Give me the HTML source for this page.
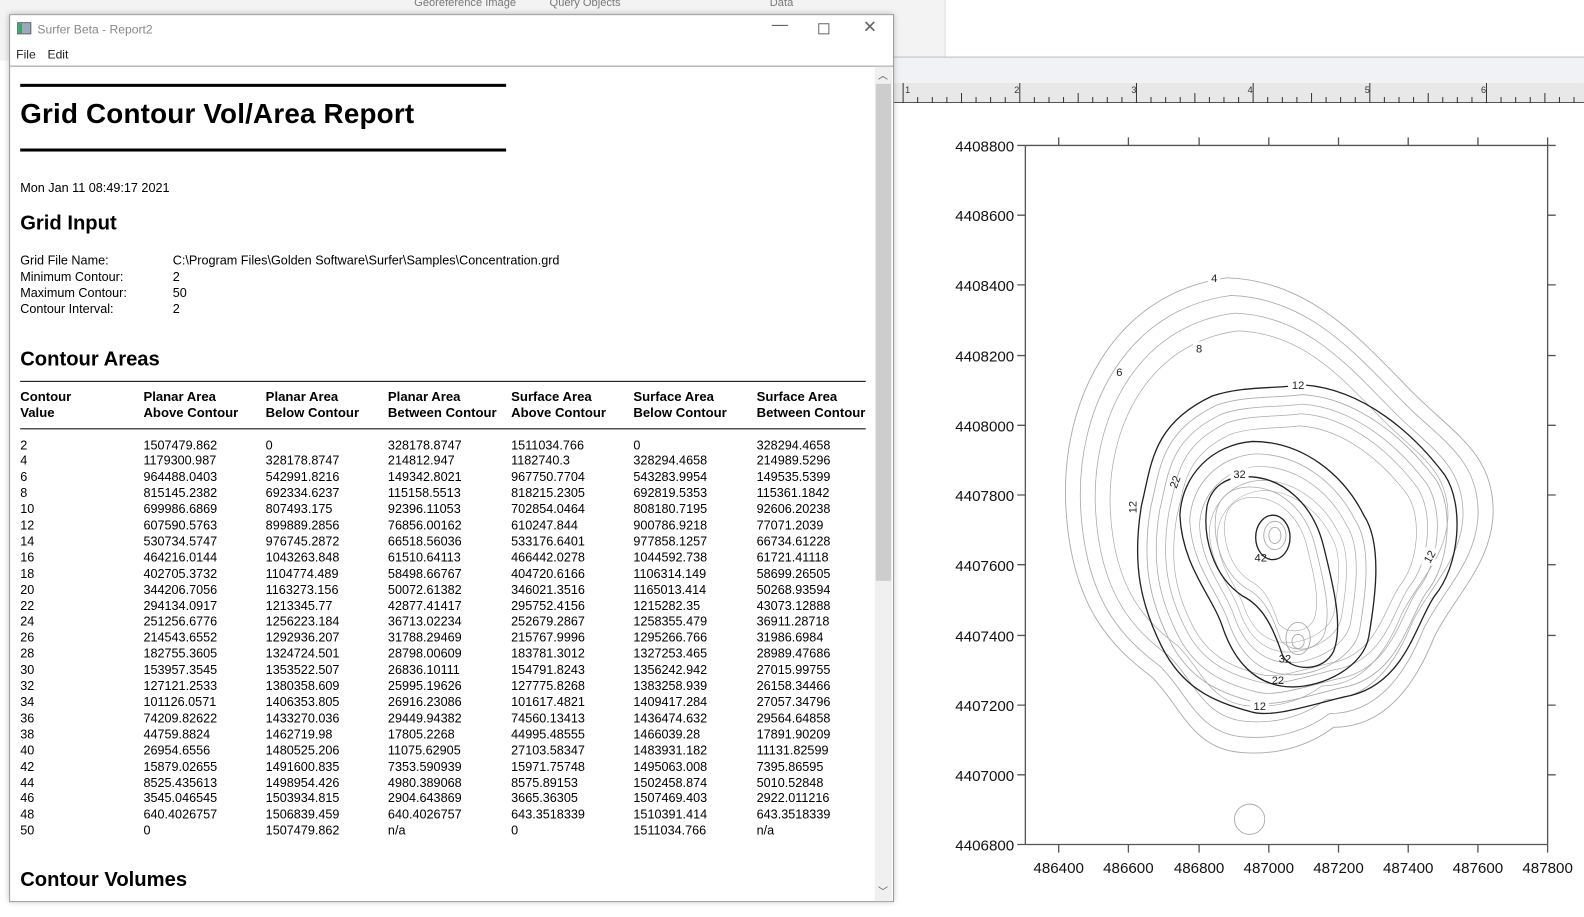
<!DOCTYPE html>
<html><head><meta charset="utf-8"><style>
*{margin:0;padding:0;box-sizing:border-box}
html,body{width:1584px;height:908px;overflow:hidden;background:#fff}
#w{position:absolute;left:0;top:0;width:1568px;height:899px;transform:scale(1.0102);transform-origin:0 0;font-family:"Liberation Sans",Arial,sans-serif}
.abs{position:absolute}
.t{position:absolute;font-size:12.5px;color:#000;white-space:nowrap}
.col{position:absolute;top:0;white-space:nowrap}
</style></head><body><div id="w">
<div class="abs" style="left:0;top:0;width:1568px;height:60px;background:#f3f3f3"></div>
<div class="abs" style="left:935px;top:0;width:633px;height:56px;background:#fff;border-left:1px solid #ddd"></div>
<div class="abs" style="left:884px;top:56px;width:684px;height:26px;background:#f0f2f5;border-top:1px solid #b8bec6"></div>
<div class="t" style="left:410px;top:-3px;color:#777;font-size:11px">Georeference Image</div>
<div class="t" style="left:544px;top:-3px;color:#777;font-size:11px">Query Objects</div>
<div class="t" style="left:762px;top:-3px;color:#777;font-size:11px">Data</div>
<svg class="abs" style="left:884px;top:82px" width="700" height="20">
<rect width="700" height="20" fill="#e8e8e8"/>
<line x1="0" y1="19.5" x2="700" y2="19.5" stroke="#555"/>
<path stroke="#333" d="M10 0V20M125.5 0V20M241 0V20M356.5 0V20M472 0V20M587.5 0V20"/>
<path stroke="#333" d="M24.4 14V20M38.9 14V20M53.3 14V20M67.8 10V20M82.2 14V20M96.6 14V20M111.1 14V20M139.9 14V20M154.4 14V20M168.8 14V20M183.3 10V20M197.7 14V20M212.1 14V20M226.6 14V20M255.4 14V20M269.9 14V20M284.3 14V20M298.8 10V20M313.2 14V20M327.6 14V20M342.1 14V20M370.9 14V20M385.4 14V20M399.8 14V20M414.3 10V20M428.7 14V20M443.1 14V20M457.6 14V20M486.4 14V20M500.9 14V20M515.3 14V20M529.8 10V20M544.2 14V20M558.6 14V20M573.1 14V20M601.9 14V20M616.4 14V20M630.8 14V20M645.3 10V20M659.7 14V20M674.1 14V20M688.6 14V20"/>
<g font-size="9" fill="#333" font-family="Liberation Sans"><text x="12" y="10">1</text><text x="120" y="10">2</text><text x="236" y="10">3</text><text x="351" y="10">4</text><text x="467" y="10">5</text><text x="582" y="10">6</text></g>
</svg>
<svg class="abs" style="left:884px;top:102px" width="700" height="806" viewBox="884 102 700 806">
<g stroke="#555" stroke-width="1.3" fill="none">
<path d="M1015 144H1540M1015 144V836M1532 136V836M1007 836H1532"/>
<path d="M1048 136V144M1117 136V144M1187 136V144M1256 136V144M1325 136V144M1394 136V144M1463 136V144M1048 836V844M1117 836V844M1187 836V844M1256 836V844M1325 836V844M1394 836V844M1463 836V844M1532 836V844"/>
<path d="M1007 144H1015M1007 213H1015M1007 282H1015M1007 352H1015M1007 421H1015M1007 490H1015M1007 559H1015M1007 629H1015M1007 698H1015M1007 767H1015M1532 213H1540M1532 282H1540M1532 352H1540M1532 421H1540M1532 490H1540M1532 559H1540M1532 629H1540M1532 698H1540M1532 767H1540"/>
</g>
<g font-size="15" fill="#111" font-family="Liberation Sans" text-anchor="end">
<text x="1004" y="150">4408800</text><text x="1004" y="219">4408600</text><text x="1004" y="288">4408400</text><text x="1004" y="358">4408200</text><text x="1004" y="427">4408000</text><text x="1004" y="496">4407800</text><text x="1004" y="565">4407600</text><text x="1004" y="635">4407400</text><text x="1004" y="704">4407200</text><text x="1004" y="773">4407000</text><text x="1004" y="842">4406800</text>
</g>
<g font-size="15" fill="#111" font-family="Liberation Sans" text-anchor="middle">
<text x="1048" y="864">486400</text><text x="1117" y="864">486600</text><text x="1187" y="864">486800</text><text x="1256" y="864">487000</text><text x="1325" y="864">487200</text><text x="1394" y="864">487400</text><text x="1463" y="864">487600</text><text x="1532" y="864">487800</text>
</g>
<g fill="none" stroke="#aaa" stroke-width="0.9">
<path id="c4" d="M1215 275C1300 278 1350 340 1400 390C1440 430 1480 450 1478 510C1475 560 1440 590 1420 630C1400 680 1370 720 1320 720C1300 735 1270 748 1230 745C1180 742 1170 700 1140 670C1100 640 1060 600 1055 500C1050 400 1100 290 1215 275Z"/>
<use href="#c4" transform="translate(1265 525) scale(.93) translate(-1265 -525)"/>
<use href="#c4" transform="translate(1265 525) scale(.86) translate(-1265 -525)"/>
<use href="#c4" transform="translate(1265 525) scale(.79) translate(-1265 -525)"/>
<use href="#c12" transform="translate(1280 540) scale(.94) translate(-1280 -540)"/>
<use href="#c12" transform="translate(1280 540) scale(.88) translate(-1280 -540)"/>
<use href="#c12" transform="translate(1280 540) scale(.82) translate(-1280 -540)"/>
<use href="#c12" transform="translate(1275 550) scale(.76) translate(-1275 -550)"/>
<use href="#c22" transform="translate(1265 560) scale(.9) translate(-1265 -560)"/>
<use href="#c22" transform="translate(1265 560) scale(.8) translate(-1265 -560)"/>
<use href="#c22" transform="translate(1265 565) scale(.7) translate(-1265 -565)"/>
<use href="#c22" transform="translate(1265 565) scale(.62) translate(-1265 -565)"/>
<use href="#c32" transform="translate(1255 540) scale(.85) translate(-1255 -540)"/>
<use href="#c32" transform="translate(1255 540) scale(.7) translate(-1255 -540)"/>
<ellipse cx="1262" cy="530" rx="11" ry="14"/><ellipse cx="1262" cy="530" rx="6" ry="8"/>
<ellipse cx="1285" cy="632" rx="12" ry="16"/><ellipse cx="1285" cy="635" rx="6" ry="7"/>
<circle cx="1237" cy="811" r="15"/>
</g>
<g fill="none" stroke="#222" stroke-width="1.3">
<path id="c12" d="M1290 381C1350 385 1400 430 1430 470C1450 500 1445 560 1420 590C1400 620 1390 680 1330 690C1290 700 1260 710 1240 705C1200 695 1170 680 1150 640C1130 600 1120 560 1130 500C1140 460 1140 420 1200 392C1230 382 1260 385 1290 381Z"/>
<path id="c22" d="M1240 437C1290 437 1330 470 1350 510C1370 540 1360 600 1355 630C1350 660 1310 680 1280 680C1240 680 1220 650 1210 620C1200 590 1170 560 1168 510C1170 470 1200 440 1240 437Z"/>
<path id="c32" d="M1230 472C1270 470 1300 500 1310 540C1320 580 1330 620 1320 645C1310 665 1280 665 1270 650C1260 620 1250 600 1230 590C1200 570 1190 530 1195 500C1200 480 1215 473 1230 472Z"/>
<ellipse cx="1260" cy="532" rx="17" ry="22"/>
</g>
<g font-size="11" fill="#222" font-family="Liberation Sans" text-anchor="middle">
<rect x="1196" y="268" width="12" height="12" fill="#fff"/><text x="1202" y="279">4</text>
<rect x="1181" y="338" width="12" height="12" fill="#fff"/><text x="1187" y="349">8</text>
<text x="1108" y="372">6</text>
<rect x="1275" y="374" width="18" height="12" fill="#fff"/><text x="1285" y="385">12</text>
<rect x="1112" y="496" width="14" height="18" fill="#fff"/><text x="1123" y="510" transform="rotate(-90 1120 505)">12</text>
<rect x="1407" y="542" width="14" height="18" fill="#fff"/><text x="1415" y="555" transform="rotate(-60 1415 551)">12</text>
<rect x="1218" y="463" width="18" height="12" fill="#fff"/><text x="1227" y="473">32</text>
<text x="1163" y="481" transform="rotate(-70 1163 477)">22</text>
<text x="1248" y="556">42</text>
<text x="1272" y="656">32</text>
<text x="1265" y="677">22</text>
<rect x="1238" y="692" width="18" height="12" fill="#fff"/><text x="1247" y="703">12</text>
</g>
</svg>
<div class="abs" style="left:9px;top:14px;width:876px;height:879px;background:#fff;border:1px solid #9a9a9a;box-shadow:0 0 6px rgba(0,0,0,.25)"></div>
<div class="abs" style="left:17px;top:22px;width:14px;height:12px;border:1px solid #556;background:linear-gradient(90deg,#3a6 0 4px,#9ab 4px)"></div>
<div class="t" style="left:37px;top:22px;color:#888;font-size:12px">Surfer Beta - Report2</div>
<div class="t" style="left:764px;top:16px;color:#666;font-size:16px">—</div>
<div class="abs" style="left:810px;top:23px;width:11px;height:11px;border:1px solid #666"></div>
<div class="t" style="left:854px;top:17px;color:#666;font-size:17px">✕</div>
<div class="t" style="left:16px;top:47px;color:#222;font-size:12px">File</div>
<div class="t" style="left:47px;top:47px;color:#222;font-size:12px">Edit</div>
<div class="abs" style="left:10px;top:65px;width:874px;height:1px;background:#999"></div>
<div class="abs" style="left:866px;top:66px;width:17px;height:826px;background:#f0f0f0"></div>
<div class="abs" style="left:867px;top:83px;width:15px;height:492px;background:#cdcdcd"></div>
<div class="t" style="left:869px;top:66px;color:#555;font-size:10px">︿</div>
<div class="t" style="left:869px;top:874px;color:#555;font-size:10px">﹀</div>
<div class="abs" style="left:20px;top:83px;width:481px;height:3px;background:#000"></div>
<div class="t" style="left:20px;top:97px;font-size:27.5px;font-weight:bold;letter-spacing:0.2px">Grid Contour Vol/Area Report</div>
<div class="abs" style="left:20px;top:147px;width:481px;height:3px;background:#000"></div>
<div class="t" style="left:20px;top:179px">Mon Jan 11 08:49:17 2021</div>
<div class="t" style="left:20px;top:210px;font-size:20px;font-weight:bold">Grid Input</div>
<div class="t" style="left:20px;top:251px">Grid File Name:</div><div class="t" style="left:171px;top:251px">C:\Program Files\Golden Software\Surfer\Samples\Concentration.grd</div>
<div class="t" style="left:20px;top:267px">Minimum Contour:</div><div class="t" style="left:171px;top:267px">2</div>
<div class="t" style="left:20px;top:283px">Maximum Contour:</div><div class="t" style="left:171px;top:283px">50</div>
<div class="t" style="left:20px;top:299px">Contour Interval:</div><div class="t" style="left:171px;top:299px">2</div>
<div class="t" style="left:20px;top:345px;font-size:20px;font-weight:bold">Contour Areas</div>
<div class="abs" style="left:20px;top:377px;width:837px;height:1px;background:#000"></div>
<div class="abs" style="left:20px;top:424px;width:837px;height:1px;background:#000"></div>
<div class="t" style="left:20px;top:385px;font-weight:bold;font-size:13px;line-height:16px">Contour<br>Value</div>
<div class="t" style="left:142px;top:385px;font-weight:bold;font-size:13px;line-height:16px">Planar Area<br>Above Contour</div>
<div class="t" style="left:263px;top:385px;font-weight:bold;font-size:13px;line-height:16px">Planar Area<br>Below Contour</div>
<div class="t" style="left:384px;top:385px;font-weight:bold;font-size:13px;line-height:16px">Planar Area<br>Between Contour</div>
<div class="t" style="left:506px;top:385px;font-weight:bold;font-size:13px;line-height:16px">Surface Area<br>Above Contour</div>
<div class="t" style="left:627px;top:385px;font-weight:bold;font-size:13px;line-height:16px">Surface Area<br>Below Contour</div>
<div class="t" style="left:749px;top:385px;font-weight:bold;font-size:13px;line-height:16px">Surface Area<br>Between Contour</div>
<div class="abs" style="left:20px;top:433.5px;font-size:12.5px;line-height:15.9px">
<div class="col" style="left:0">2<br>4<br>6<br>8<br>10<br>12<br>14<br>16<br>18<br>20<br>22<br>24<br>26<br>28<br>30<br>32<br>34<br>36<br>38<br>40<br>42<br>44<br>46<br>48<br>50</div>
<div class="col" style="left:122px">1507479.862<br>1179300.987<br>964488.0403<br>815145.2382<br>699986.6869<br>607590.5763<br>530734.5747<br>464216.0144<br>402705.3732<br>344206.7056<br>294134.0917<br>251256.6776<br>214543.6552<br>182755.3605<br>153957.3545<br>127121.2533<br>101126.0571<br>74209.82622<br>44759.8824<br>26954.6556<br>15879.02655<br>8525.435613<br>3545.046545<br>640.4026757<br>0</div>
<div class="col" style="left:243px">0<br>328178.8747<br>542991.8216<br>692334.6237<br>807493.175<br>899889.2856<br>976745.2872<br>1043263.848<br>1104774.489<br>1163273.156<br>1213345.77<br>1256223.184<br>1292936.207<br>1324724.501<br>1353522.507<br>1380358.609<br>1406353.805<br>1433270.036<br>1462719.98<br>1480525.206<br>1491600.835<br>1498954.426<br>1503934.815<br>1506839.459<br>1507479.862</div>
<div class="col" style="left:364px">328178.8747<br>214812.947<br>149342.8021<br>115158.5513<br>92396.11053<br>76856.00162<br>66518.56036<br>61510.64113<br>58498.66767<br>50072.61382<br>42877.41417<br>36713.02234<br>31788.29469<br>28798.00609<br>26836.10111<br>25995.19626<br>26916.23086<br>29449.94382<br>17805.2268<br>11075.62905<br>7353.590939<br>4980.389068<br>2904.643869<br>640.4026757<br>n/a</div>
<div class="col" style="left:486px">1511034.766<br>1182740.3<br>967750.7704<br>818215.2305<br>702854.0464<br>610247.844<br>533176.6401<br>466442.0278<br>404720.6166<br>346021.3516<br>295752.4156<br>252679.2867<br>215767.9996<br>183781.3012<br>154791.8243<br>127775.8268<br>101617.4821<br>74560.13413<br>44995.48555<br>27103.58347<br>15971.75748<br>8575.89153<br>3665.36305<br>643.3518339<br>0</div>
<div class="col" style="left:607px">0<br>328294.4658<br>543283.9954<br>692819.5353<br>808180.7195<br>900786.9218<br>977858.1257<br>1044592.738<br>1106314.149<br>1165013.414<br>1215282.35<br>1258355.479<br>1295266.766<br>1327253.465<br>1356242.942<br>1383258.939<br>1409417.284<br>1436474.632<br>1466039.28<br>1483931.182<br>1495063.008<br>1502458.874<br>1507469.403<br>1510391.414<br>1511034.766</div>
<div class="col" style="left:729px">328294.4658<br>214989.5296<br>149535.5399<br>115361.1842<br>92606.20238<br>77071.2039<br>66734.61228<br>61721.41118<br>58699.26505<br>50268.93594<br>43073.12888<br>36911.28718<br>31986.6984<br>28989.47686<br>27015.99755<br>26158.34466<br>27057.34796<br>29564.64858<br>17891.90209<br>11131.82599<br>7395.86595<br>5010.52848<br>2922.011216<br>643.3518339<br>n/a</div>
</div>
<div class="t" style="left:20px;top:860px;font-size:20px;font-weight:bold">Contour Volumes</div>
</div></body></html>
